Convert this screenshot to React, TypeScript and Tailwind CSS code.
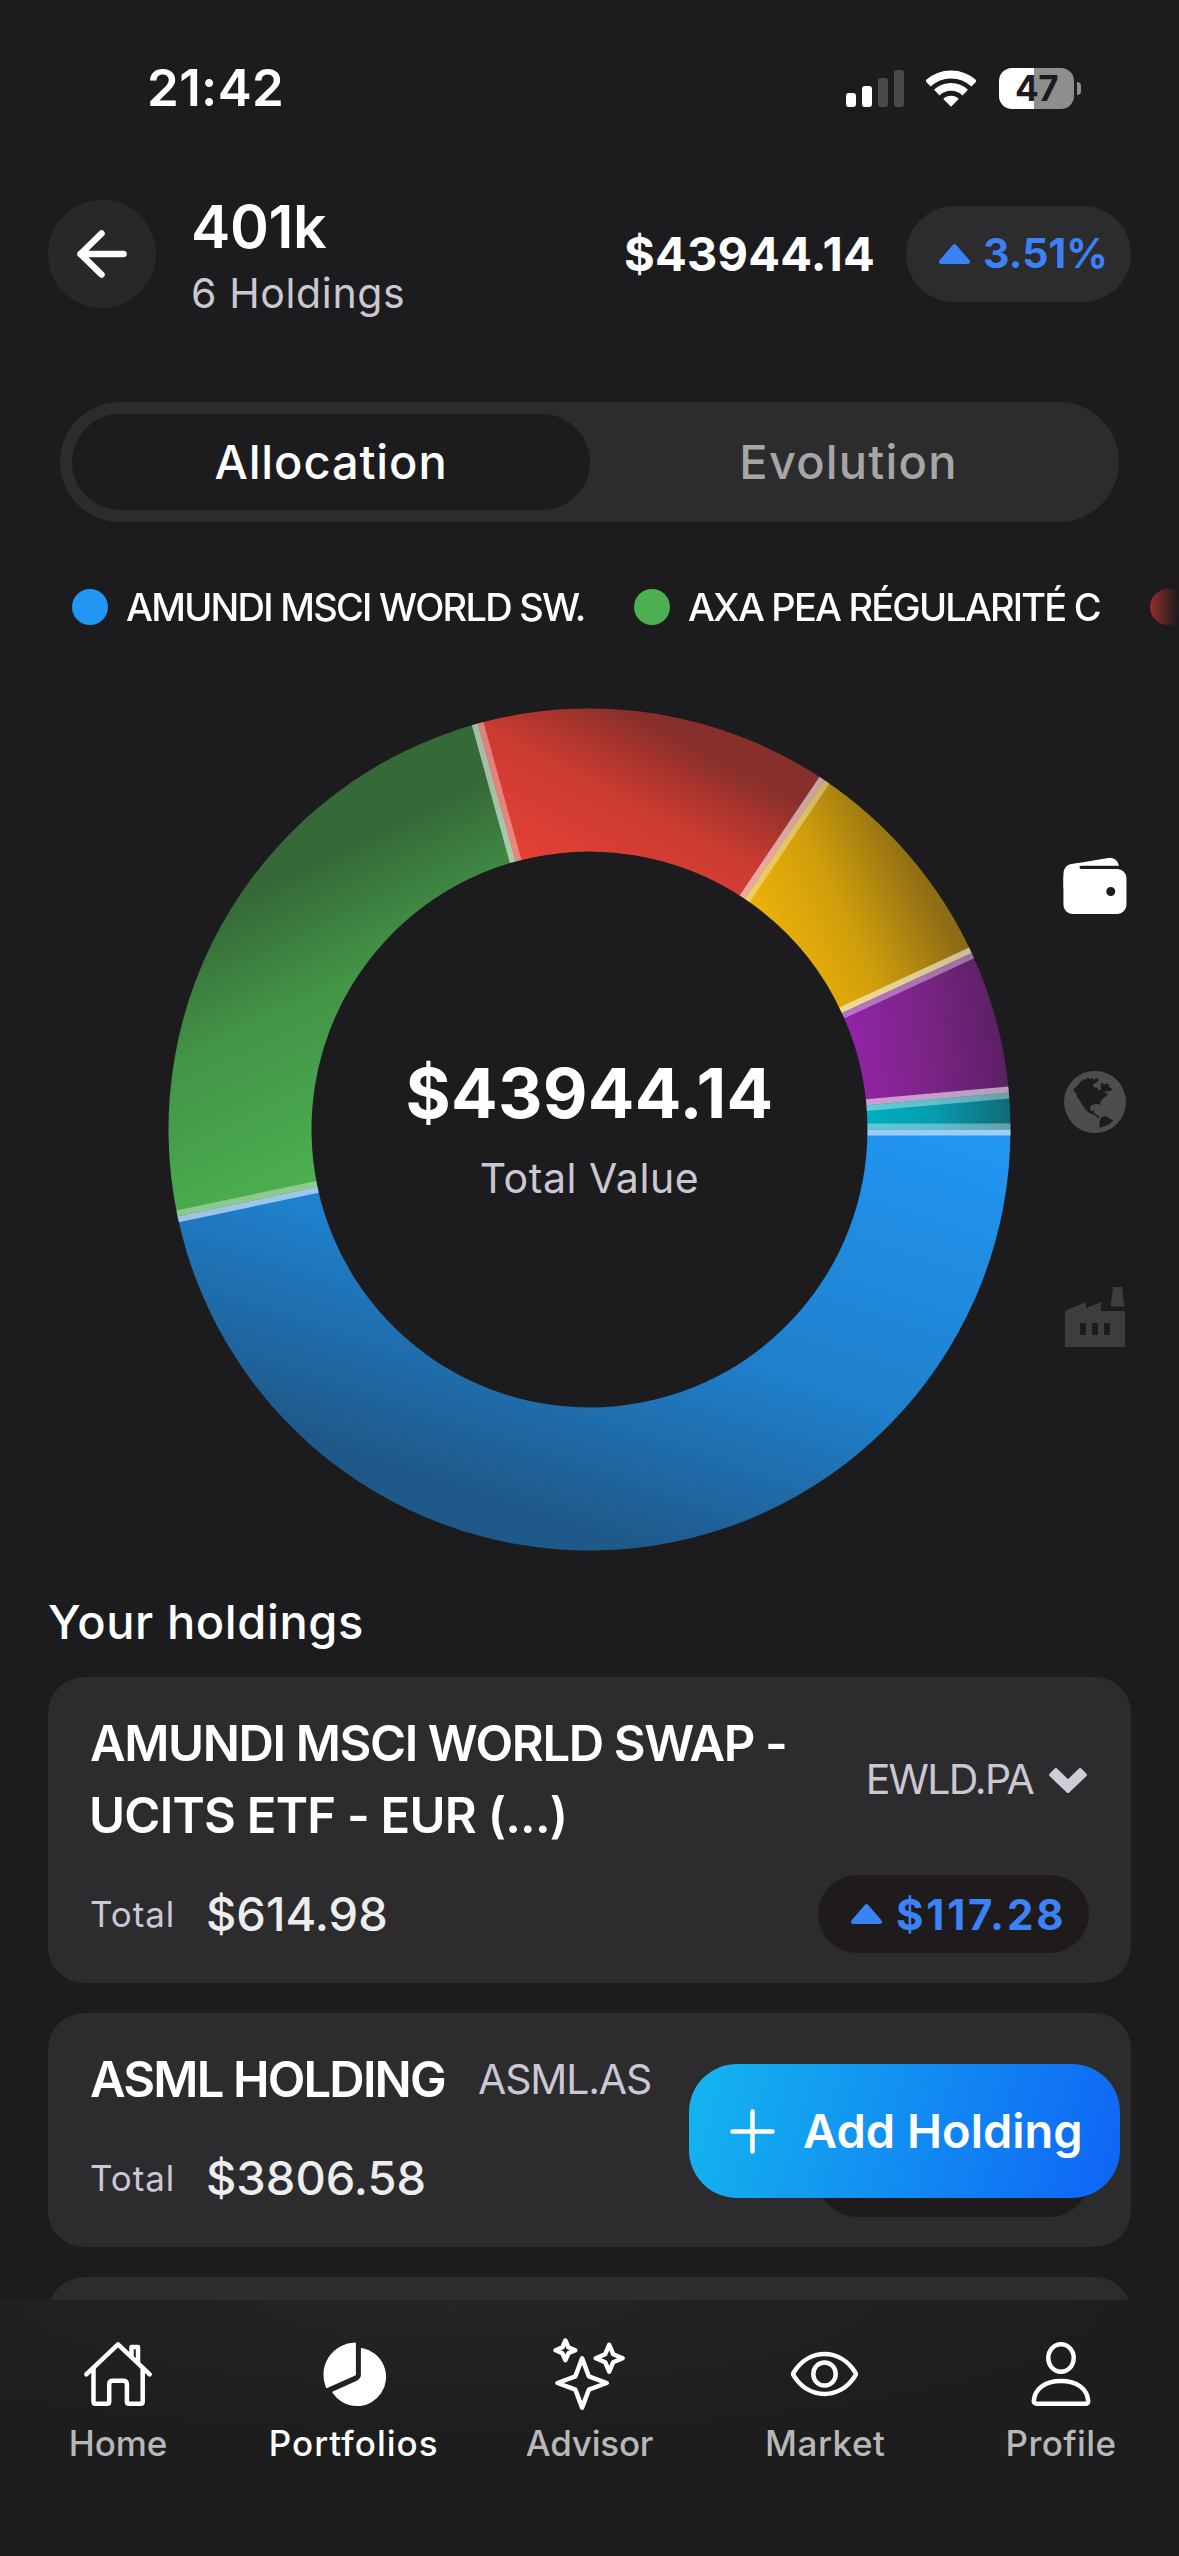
import type { ReactNode } from "react";
import { IoWallet } from "react-icons/io5";
import { MdFactory } from "react-icons/md";

const CENTER = 429.5;
const OUTER = 421;
const INNER = 278;

// Angles run clockwise from the right, gradient line is in chart units
const slices = [
  { id: "blue", from: 0, to: 168.1, colors: ["#2196f3", "#1f80cc", "#1f598a"], mid: 0.58, line: [841, 440, 680, 916] },
  { id: "green", from: 168.1, to: 254.6, colors: ["#4caf50", "#429346", "#366938"], mid: 0.6, line: [155, 480, 30, 224] },
  { id: "red", from: 254.6, to: 303.93, colors: ["#e54035", "#c93b31", "#872f2a"], mid: 0.56, line: [353, 152, 434, -7] },
  { id: "yellow", from: 303.93, to: 335.2, colors: ["#ebb10a", "#d09e0b", "#8c6c14"], mid: 0.44, line: [597, 203, 744, 131] },
  { id: "purple", from: 335.2, to: 354.97, colors: ["#9024a4", "#7c2487", "#5a2063"], mid: 0.47, line: [690, 317, 838, 298] },
  { id: "teal", from: 354.97, to: 360, colors: ["#00acc1", "#069db0", "#0f6a76"], mid: 0.45, line: [708, 429, 851, 429] },
];

const holdings = [
  { lines: ["AMUNDI MSCI WORLD SWAP -", "UCITS ETF - EUR (...)"], ticker: "EWLD.PA", total: "$614.98", gain: "$117.28" },
  { lines: ["ASML HOLDING"], ticker: "ASML.AS", total: "$3806.58", gain: "" },
];

const point = (deg: number, r: number) => {
  const a = (deg * Math.PI) / 180;
  return [CENTER + r * Math.cos(a), CENTER + r * Math.sin(a)];
};

const ringPath = (from: number, to: number) => {
  const large = to - from > 180 ? 1 : 0;
  const [x1, y1] = point(from, OUTER);
  const [x2, y2] = point(to, OUTER);
  const [x3, y3] = point(to, INNER);
  const [x4, y4] = point(from, INNER);
  return `M${x1} ${y1}A${OUTER} ${OUTER} 0 ${large} 1 ${x2} ${y2}L${x3} ${y3}A${INNER} ${INNER} 0 ${large} 0 ${x4} ${y4}Z`;
};

// Six-unit wide strip that runs along one straight edge of a slice
const Edge = ({ deg, side, opacity }: { deg: number; side: 1 | -1; opacity: number }) => {
  const a = (deg * Math.PI) / 180;
  const dx = -Math.sin(a) * 3 * side;
  const dy = Math.cos(a) * 3 * side;
  const [x1, y1] = point(deg, INNER);
  const [x2, y2] = point(deg, OUTER);
  return <line x1={x1 + dx} y1={y1 + dy} x2={x2 + dx} y2={y2 + dy} stroke="#fff" strokeWidth="6" strokeOpacity={opacity} />;
};

const Donut = () => (
  <div className="relative size-[859px]">
    <svg viewBox="0 0 859 859" className="size-full">
      <defs>
        {slices.map((s) => (
          <linearGradient key={s.id} id={s.id} gradientUnits="userSpaceOnUse" x1={s.line[0]} y1={s.line[1]} x2={s.line[2]} y2={s.line[3]}>
            <stop offset="0" stopColor={s.colors[0]} />
            <stop offset={s.mid} stopColor={s.colors[1]} />
            <stop offset="1" stopColor={s.colors[2]} />
          </linearGradient>
        ))}
      </defs>
      {slices.map((s) => (
        <path key={s.id} d={ringPath(s.from, s.to)} fill={`url(#${s.id})`} />
      ))}
      {slices.map((s) => (
        <g key={s.id}>
          <Edge deg={s.from} side={1} opacity={s.id === "blue" ? 0.54 : 0.36} />
          <Edge deg={s.to} side={-1} opacity={s.id === "teal" ? 0.36 : 0.56} />
        </g>
      ))}
    </svg>
    <div className="absolute inset-0 flex flex-col items-center justify-center pt-[13px]">
      <span className="h-[86px] text-[69px] leading-[86px] font-bold tracking-[0.28px]">$43944.14</span>
      <span className="h-[85px] text-[41px] leading-[85px] tracking-[0.57px] text-[#cbc7d3]">Total Value</span>
    </div>
  </div>
);

const Triangle = () => (
  <svg viewBox="0 0 31 20" className="h-5 w-[31px] shrink-0">
    <path d="M14 .7a2.200 2.200 0 0 1 3 0L30.200 16c1.500 2 .8 4-1.700 4h-26C0 20-.7 18 .8 16z" fill="#3b82f6" />
  </svg>
);

const Chevron = () => (
  <svg viewBox="0 0 38 25" className="h-[25px] w-[38px] shrink-0">
    <path d="M0.800 5.500 5.500 0.800a2 2 0 0 1 2.800 0L19 11.300 29.700 0.800a2 2 0 0 1 2.800 0L37.200 5.500a2 2 0 0 1 0 2.800L20.500 24.300a2 2 0 0 1-3 0L0.800 8.300a2 2 0 0 1 0-2.800z" fill="#d0cdd8" />
  </svg>
);

const StatusBar = () => (
  <div className="flex h-[176px] items-center pr-[98px] pl-[147px]">
    <span className="text-[51px] font-semibold tracking-[0.36px]">21:42</span>
    <div className="ml-auto flex items-center">
      <div className="mr-[22px] flex h-[37px] items-end gap-[6px]">
        <div className="h-[14px] w-[10px] rounded-[3px] bg-white" />
        <div className="h-[21px] w-[10px] rounded-[3px] bg-white" />
        <div className="h-[29px] w-[10px] rounded-[3px] bg-[#4a4a4c]" />
        <div className="h-[37px] w-[10px] rounded-[3px] bg-[#4a4a4c]" />
      </div>
      <svg viewBox="0 0 50.600 38" className="mr-[23px] h-[38px] w-[50px]">
        <g fill="none" stroke="#fff" strokeWidth="8">
          <path d="M1.900 14.600A34 34 0 0 1 48.700 14.600" />
          <path d="M10.900 23.600A21 21 0 0 1 39.700 23.600" />
        </g>
        <path d="M17.500 30.200A11 11 0 0 1 33.100 30.200L25.300 38z" fill="#fff" />
      </svg>
      <div className="flex h-[41px] w-[75px] items-center justify-center rounded-[13px] bg-linear-to-r from-white from-47% to-[#8e8e8f] to-47%">
        <span className="text-[35px] leading-none font-bold tracking-[-0.5px] text-[#1c1c1e]">47</span>
      </div>
      <div className="ml-[3px] h-[13px] w-1 rounded-r-full bg-[#8e8e8f]" />
    </div>
  </div>
);

const Header = () => (
  <div className="flex h-[156px] items-center px-12">
    <div className="flex size-[108px] items-center justify-center rounded-full bg-[#28282a]">
      <svg viewBox="0 0 52 50" className="h-[50px] w-[52px]" fill="none" stroke="#fff" strokeWidth="6.500" strokeLinecap="round" strokeLinejoin="round">
        <path d="M25.500 4.500 4.500 25l21 20.500M4.500 25H47.500" />
      </svg>
    </div>
    <div className="mt-3 ml-[35px] flex flex-col">
      <span className="text-[59px] leading-[67px] font-semibold tracking-[-0.4px]">401k</span>
      <span className="text-[41px] leading-[67px] tracking-[0.63px] text-[#cbc7d3]">6 Holdings</span>
    </div>
    <span className="mr-[31px] ml-auto text-[47px] font-bold tracking-[0.23px]">$43944.14</span>
    <div className="flex h-24 w-[225px] items-center gap-[13px] rounded-full bg-[#2c2c2e] pl-[33px]">
      <Triangle />
      <span className="text-[41px] font-bold tracking-[0.1px] text-[#3b82f6]">3.51%</span>
    </div>
  </div>
);

const Tabs = () => (
  <div className="mx-[60px] mt-[70px] flex h-[120px] rounded-full bg-[#2c2c2e] p-3 text-[47px] font-medium">
    <div className="flex w-[518px] items-center justify-center rounded-full bg-[#1c1c1e] tracking-[0.9px]">Allocation</div>
    <div className="flex flex-1 items-center justify-center tracking-[1.2px] text-[#a6a6a7]">Evolution</div>
  </div>
);

const Legend = () => (
  <div className="flex h-[170px] items-center overflow-hidden mask-r-from-[1131px] mask-r-to-[1179px] pl-[72px] text-[38px] font-medium whitespace-nowrap">
    <div className="flex w-[562px] shrink-0 items-center gap-[18px] tracking-[-1.74px]">
      <div className="size-9 rounded-full bg-[#2196f3]" />
      AMUNDI MSCI WORLD SW.
    </div>
    <div className="flex w-[516px] shrink-0 items-center gap-[18px] tracking-[-1.82px]">
      <div className="size-9 rounded-full bg-[#4caf50]" />
      AXA PEA RÉGULARITÉ C
    </div>
    <div className="size-9 shrink-0 rounded-full bg-[#e53935]" />
  </div>
);

const Globe = () => (
  <svg viewBox="12 3 216 216" className="size-[72px]">
    <circle cx="120" cy="111" r="93" fill="#4d4d4f" />
    <g fill="#1c1c1e">
      <path d="M57 80 55 72 68 62 76 50 86 43 92 44 99 37 104 43 110 38 115 44 122 41 129 39 131 47 121 53 113 61 117 67 127 68 132 76 138 74 137 60 139 52 147 59 156 55 163 60 162 66 173 72 166 79 152 79 148 84 160 86 150 96 140 104 136 111 135 121 129 117 118 118 108 121 105 131 109 139 118 135 117 143 123 149 130 151 134 160 128 159 119 150 103 144 92 134 80 116 72 104 64 92 66 86z" />
      <path d="M138 158 147 152 160 156 164 161 175 166 163 178 148 184 134 188 133 174z" />
    </g>
  </svg>
);

const Chart = () => (
  <div className="flex h-[874px] items-center pl-[160px]">
    <Donut />
    <div className="mb-[55px] ml-10 flex flex-col gap-[143px]">
      <IoWallet size={72} />
      <Globe />
      <MdFactory size={72} className="text-[#3d3d3f]" />
    </div>
  </div>
);

const HoldingCard = ({ lines, ticker, total, gain }: (typeof holdings)[number]) => (
  <div className="rounded-[36px] bg-[#2c2c2e] px-[42px] pt-[31px] pb-[30px]">
    <div className="flex items-center whitespace-nowrap">
      {lines.length > 1 ? (
        <>
          <div className="flex flex-col text-[49px] leading-[72px] font-semibold">
            <span className="tracking-[-1.39px]">{lines[0]}</span>
            <span className="-ml-[1px] tracking-[-0.75px]">{lines[1]}</span>
          </div>
          <span className="ml-auto text-[41px] tracking-[-1.7px] text-[#cbc7d3]">{ticker}</span>
          <div className="mr-[2px] ml-[16px]">
            <Chevron />
          </div>
        </>
      ) : (
        <>
          <span className="w-[388px] text-[49px] leading-[72px] font-semibold tracking-[-1.85px]">{lines[0]}</span>
          <span className="text-[41px] tracking-[-1.15px] text-[#cbc7d3]">{ticker}</span>
        </>
      )}
    </div>
    <div className="mt-[23px] flex h-[78px] items-center">
      <span className="w-[116px] text-[35px] tracking-[0.9px] text-[#cbc7d3]">Total</span>
      <span className="text-[47px] font-medium text-[#ededed]">{total}</span>
      <div className="ml-auto flex h-full w-[271px] items-center gap-[14px] rounded-full bg-[#1f1b1d] pl-[33px]">
        <Triangle />
        <span className="text-[42px] font-bold tracking-[2.8px] text-[#3b82f6]">{gain}</span>
      </div>
    </div>
  </div>
);

const star = (cx: number, cy: number, r: number, k: number) =>
  `M${cx} ${cy - r}L${cx + k} ${cy - k}L${cx + r} ${cy}L${cx + k} ${cy + k}L${cx} ${cy + r}L${cx - k} ${cy + k}L${cx - r} ${cy}L${cx - k} ${cy - k}Z`;

const navItems: { label: string; className: string; icon: ReactNode }[] = [
  {
    label: "Home",
    className: "text-[#b8b8b8] tracking-[-0.1px]",
    icon: (
      <>
        <path d="M4.300 36.300 36 6.300 67.700 36.300" />
        <path d="M11.500 30V63.800q0 2 2 2H25.200q2 0 2-2V46.500q0-3.700 3.700-3.700H41.200q3.700 0 3.700 3.700V63.800q0 2 2 2H58.700q2 0 2-2V30" />
        <path d="M49.500 18.500V9H56V24.500" />
      </>
    ),
  },
  {
    label: "Portfolios",
    className: "text-white tracking-[1.03px]",
    icon: (
      <g fill="#fff" strokeWidth="2">
        <path d="M36.900 5.400A31.600 31.600 0 0 0 8.800 49L36.900 36.500Z" />
        <path d="M43.900 11.100A28.200 28.200 0 1 1 15.300 54.300L38.600 44Q43.900 41.500 43.900 36.500Z" />
      </g>
    ),
  },
  {
    label: "Advisor",
    className: "text-[#b8b8b8] tracking-[-0.22px]",
    icon: (
      <>
        <path d={star(12.4, 12.3, 9.8, 3)} />
        <path d={star(56.2, 20.2, 13.4, 4)} />
        <path d={star(29.1, 45, 24.6, 6.7)} />
      </>
    ),
  },
  {
    label: "Market",
    className: "text-[#b8b8b8] tracking-[0.55px]",
    icon: (
      <>
        <path d="M4.800 34.300C20 10 51 10 66.200 34.300Q67.500 36 66.200 37.700C51 62 20 62 4.800 37.700Q3.500 36 4.800 34.300Z" />
        <ellipse cx="35.500" cy="36" rx="11.200" ry="11.600" />
      </>
    ),
  },
  {
    label: "Profile",
    className: "text-[#b8b8b8] tracking-[0.42px]",
    icon: (
      <>
        <ellipse cx="36" cy="20" rx="12.700" ry="13.700" />
        <path d="M8.800 63C9.500 51 20 43 36 43S62.500 51 63.200 63q0 2.700-2.700 2.700H11.500q-2.700 0-2.700-2.700z" />
      </>
    ),
  },
];

const BottomNav = () => (
  <nav className="absolute inset-x-0 bottom-0 grid h-64 grid-cols-5 bg-[#1d1d1d] bg-[radial-gradient(ellipse_60%_55%_at_38%_0%,#252525,#1d1d1d)] pt-[38px]">
    {navItems.map((item) => (
      <div key={item.label} className="flex flex-col items-center gap-3">
        <svg viewBox="0 0 72 72" className="size-[72px]" fill="none" stroke="#fff" strokeWidth="4.500" strokeLinecap="round" strokeLinejoin="round">
          {item.icon}
        </svg>
        <span className={`text-[35px] leading-[42px] font-medium ${item.className}`}>{item.label}</span>
      </div>
    ))}
  </nav>
);

const App = () => {
  return (
    <div className="relative h-[2556px] w-[1179px] overflow-hidden bg-[#1c1c1e] font-['Inter',sans-serif] text-white">
      <StatusBar />
      <Header />
      <Tabs />
      <Legend />
      <Chart />

      {/* Holdings */}
      <div className="px-12">
        <h2 className="text-[47px] leading-[111px] font-medium tracking-[0.6px]">Your holdings</h2>
        <div className="flex flex-col gap-[30px]">
          {holdings.map((h) => (
            <HoldingCard key={h.ticker} {...h} />
          ))}
          <div className="h-[234px] rounded-[36px] bg-[#2c2c2e]" />
        </div>
      </div>

      <BottomNav />

      {/* Floating action */}
      <button className="absolute right-[59px] bottom-[358px] flex h-[134px] w-[431px] items-center gap-[28px] rounded-[48px] bg-[linear-gradient(107deg,#14b6ee,#0f64f5)] pl-[41px]">
        <svg viewBox="0 0 45 45" className="size-[45px] shrink-0" stroke="#fff" strokeWidth="4.500" strokeLinecap="round">
          <path d="M22.500 2.500V42.500M2.500 22.500H42.500" />
        </svg>
        <span className="text-[47px] font-semibold whitespace-nowrap">Add Holding</span>
      </button>
    </div>
  );
};

export default App;
